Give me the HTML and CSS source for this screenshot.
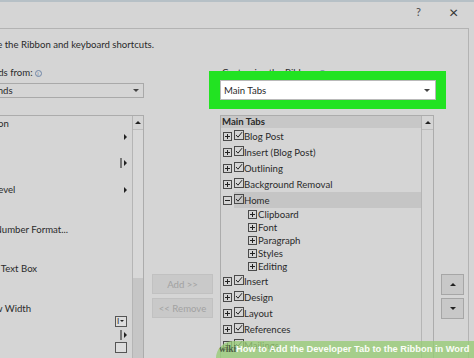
FILE: index.html
```html
<!DOCTYPE html>
<html lang="en">
<head>
    <meta charset="UTF-8">
    <title>Word Options - Customize Ribbon</title>
    <link rel="stylesheet" href="styles.css">
</head>
<body>
    <div class="topstrip"></div>
    <div class="titlebar">
        <span class="help">?</span>
        <span class="closebtn">×</span>
    </div>

    <div class="panel">
        <div class="intro">Customize the Ribbon and keyboard shortcuts.</div>

        <div class="columns">
            <!-- commands list -->
            <div class="col-left">
                <div class="label">Choose commands from:<span class="info">i</span></div>
                <div class="select"><span class="select-text">Popular Commands</span><span class="caret"></span></div>
                <div class="listbox">
                    <div class="items">
                        <div class="cmd"><span>Accept Revision</span></div>
                        <div class="cmd"><span>Add Table</span><span class="mark"><i class="tri"></i></span></div>
                        <div class="cmd"><span>Align Left</span></div>
                        <div class="cmd"><span>Bullets</span><span class="mark"><i class="bar"></i><i class="tri"></i></span></div>
                        <div class="cmd"><span>Center</span></div>
                        <div class="cmd"><span>Change List Level</span><span class="mark"><i class="tri"></i></span></div>
                        <div class="cmd"><span>Copy</span></div>
                        <div class="cmd"><span>Cut</span></div>
                        <div class="cmd"><span>Define New Number Format...</span></div>
                        <div class="cmd"><span>Delete</span></div>
                        <div class="cmd"><span>Draw Table</span></div>
                        <div class="cmd"><span>Draw Vertical Text Box</span></div>
                        <div class="cmd"><span>Email</span></div>
                        <div class="cmd"><span>Find</span></div>
                        <div class="cmd"><span>Fit to Window Width</span></div>
                        <div class="cmd"><span>Font</span><span class="mark"><i class="fontbox">I<b></b></i></span></div>
                        <div class="cmd"><span>Font Color</span><span class="mark"><i class="bar"></i><i class="tri"></i></span></div>
                        <div class="cmd"><span>Font Size</span><span class="mark"><i class="fontbox"></i></span></div>
                    </div>
                    <div class="scrollbar">
                        <div class="sb-btn"><i class="up"></i></div>
                        <div class="sb-thumb"></div>
                        <div class="sb-track"></div>
                    </div>
                </div>
            </div>

            <div class="col-mid">
                <div class="btn disabled">Add &gt;&gt;</div>
                <div class="btn disabled">&lt;&lt; Remove</div>
            </div>

            <!-- ribbon tree -->
            <div class="col-right">
                <div class="label">Customize the Ribbon:<span class="info">i</span></div>
                <div class="highlight">
                    <div class="select white"><span>Main Tabs</span><span class="caret"></span></div>
                </div>
                <div class="listbox">
                    <div class="items tree">
                        <div class="tree-head">Main Tabs</div>
                        <div class="node"><svg class="exp" viewBox="0 0 9 9"><rect x=".5" y=".5" width="8" height="8"/><path d="M2 4.5h5M4.5 2v5"/></svg><span class="sel"><svg class="chk" viewBox="0 0 10 10"><rect x=".5" y=".5" width="9" height="9"/><path d="M2 5l2 2.2 4-5"/></svg>Blog Post</span></div>
                        <div class="node"><svg class="exp" viewBox="0 0 9 9"><rect x=".5" y=".5" width="8" height="8"/><path d="M2 4.5h5M4.5 2v5"/></svg><span class="sel"><svg class="chk" viewBox="0 0 10 10"><rect x=".5" y=".5" width="9" height="9"/><path d="M2 5l2 2.2 4-5"/></svg>Insert (Blog Post)</span></div>
                        <div class="node"><svg class="exp" viewBox="0 0 9 9"><rect x=".5" y=".5" width="8" height="8"/><path d="M2 4.5h5M4.5 2v5"/></svg><span class="sel"><svg class="chk" viewBox="0 0 10 10"><rect x=".5" y=".5" width="9" height="9"/><path d="M2 5l2 2.2 4-5"/></svg>Outlining</span></div>
                        <div class="node"><svg class="exp" viewBox="0 0 9 9"><rect x=".5" y=".5" width="8" height="8"/><path d="M2 4.5h5M4.5 2v5"/></svg><span class="sel"><svg class="chk" viewBox="0 0 10 10"><rect x=".5" y=".5" width="9" height="9"/><path d="M2 5l2 2.2 4-5"/></svg>Background Removal</span></div>
                        <div class="node"><svg class="exp" viewBox="0 0 9 9"><rect x=".5" y=".5" width="8" height="8"/><path d="M2 4.5h5"/></svg><span class="sel active"><svg class="chk" viewBox="0 0 10 10"><rect x=".5" y=".5" width="9" height="9"/><path d="M2 5l2 2.2 4-5"/></svg>Home</span></div>
                        <div class="node sub"><svg class="exp" viewBox="0 0 9 9"><rect x=".5" y=".5" width="8" height="8"/><path d="M2 4.5h5M4.5 2v5"/></svg>Clipboard</div>
                        <div class="node sub"><svg class="exp" viewBox="0 0 9 9"><rect x=".5" y=".5" width="8" height="8"/><path d="M2 4.5h5M4.5 2v5"/></svg>Font</div>
                        <div class="node sub"><svg class="exp" viewBox="0 0 9 9"><rect x=".5" y=".5" width="8" height="8"/><path d="M2 4.5h5M4.5 2v5"/></svg>Paragraph</div>
                        <div class="node sub"><svg class="exp" viewBox="0 0 9 9"><rect x=".5" y=".5" width="8" height="8"/><path d="M2 4.5h5M4.5 2v5"/></svg>Styles</div>
                        <div class="node sub"><svg class="exp" viewBox="0 0 9 9"><rect x=".5" y=".5" width="8" height="8"/><path d="M2 4.5h5M4.5 2v5"/></svg>Editing</div>
                        <div class="node"><svg class="exp" viewBox="0 0 9 9"><rect x=".5" y=".5" width="8" height="8"/><path d="M2 4.5h5M4.5 2v5"/></svg><span class="sel"><svg class="chk" viewBox="0 0 10 10"><rect x=".5" y=".5" width="9" height="9"/><path d="M2 5l2 2.2 4-5"/></svg>Insert</span></div>
                        <div class="node"><svg class="exp" viewBox="0 0 9 9"><rect x=".5" y=".5" width="8" height="8"/><path d="M2 4.5h5M4.5 2v5"/></svg><span class="sel"><svg class="chk" viewBox="0 0 10 10"><rect x=".5" y=".5" width="9" height="9"/><path d="M2 5l2 2.2 4-5"/></svg>Design</span></div>
                        <div class="node"><svg class="exp" viewBox="0 0 9 9"><rect x=".5" y=".5" width="8" height="8"/><path d="M2 4.5h5M4.5 2v5"/></svg><span class="sel"><svg class="chk" viewBox="0 0 10 10"><rect x=".5" y=".5" width="9" height="9"/><path d="M2 5l2 2.2 4-5"/></svg>Layout</span></div>
                        <div class="node"><svg class="exp" viewBox="0 0 9 9"><rect x=".5" y=".5" width="8" height="8"/><path d="M2 4.5h5M4.5 2v5"/></svg><span class="sel"><svg class="chk" viewBox="0 0 10 10"><rect x=".5" y=".5" width="9" height="9"/><path d="M2 5l2 2.2 4-5"/></svg>References</span></div>
                        <div class="node"><svg class="exp" viewBox="0 0 9 9"><rect x=".5" y=".5" width="8" height="8"/><path d="M2 4.5h5M4.5 2v5"/></svg><span class="sel"><svg class="chk" viewBox="0 0 10 10"><rect x=".5" y=".5" width="9" height="9"/><path d="M2 5l2 2.2 4-5"/></svg>Mailings</span></div>
                    </div>
                    <div class="scrollbar">
                        <div class="sb-btn"><i class="up"></i></div>
                    </div>
                </div>
            </div>

            <div class="col-order">
                <div class="btn order"><i class="up"></i></div>
                <div class="btn order"><i class="down"></i></div>
            </div>
        </div>
    </div>

    <div class="watermark"><span class="wiki">wiki</span><span class="how">How</span> to Add the Developer Tab to the Ribbon in Word</div>
</body>
</html>
```

FILE: styles.css
```css
* {
    box-sizing: border-box;
}

body {
    margin: 0;
    width: 474px;
    height: 358px;
    overflow: hidden;
    position: relative;
    background: #d5d5d5;
    font-family: Lato, 'Noto Sans', sans-serif;
    font-size: 9.6px;
    color: #2a2a2a;
}

.topstrip {
    height: 2px;
    background: #b6c0c6;
}

.titlebar {
    height: 26px;
    padding: 0 0 7px 0;
    display: flex;
    align-items: center;
}

.help {
    margin-left: 416px;
    width: 8px;
    font-size: 11px;
    color: #4a4a4a;
    line-height: 1;
}

.closebtn {
    margin-left: 25px;
    width: 12px;
    height: 14px;
    font-size: 16px;
    line-height: 14px;
    color: #333;
}

.panel {
    width: 469px;
    height: 330px;
    border-top: 1px solid #b3b3b3;
    border-right: 1px solid #b3b3b3;
}

.intro {
    margin: 9px 0 0 -42px;
    line-height: 14px;
    white-space: nowrap;
}

.columns {
    display: flex;
}

.col-left {
    flex: none;
    width: 224px;
    margin-left: -80px;
}

.col-mid {
    flex: none;
    width: 76px;
    padding: 222px 0 0 8px;
    display: flex;
    flex-direction: column;
    gap: 4px;
}

.col-right {
    flex: none;
    width: 214px;
}

.col-order {
    flex: none;
    width: 34px;
    padding: 222px 0 0 7px;
    display: flex;
    flex-direction: column;
    gap: 3px;
}

.label {
    margin-top: 14px;
    line-height: 14px;
    white-space: nowrap;
    display: flex;
    align-items: center;
}

.col-left .label {
    padding-left: 8px;
}

.col-right .label {
    padding-left: 2px;
}

.info {
    width: 7px;
    height: 7px;
    margin-left: 2px;
    border: 1px solid #6f86a8;
    border-radius: 50%;
    font-style: normal;
    font-size: 6px;
    line-height: 5px;
    text-align: center;
    color: #6f86a8;
}

.select {
    height: 15px;
    margin-top: 3px;
    border: 1px solid #a9a9a9;
    display: flex;
    align-items: center;
    justify-content: space-between;
    padding: 0 4px 0 10px;
    white-space: nowrap;
}

.select.white {
    height: 20px;
    margin-top: 0;
    background: #fff;
    border-color: #b9b9b9;
    padding: 0 5px 0 3px;
}

.caret {
    width: 0;
    height: 0;
    border-left: 3px solid transparent;
    border-right: 3px solid transparent;
    border-top: 3px solid #444;
}

.highlight {
    position: relative;
    z-index: 1;
    margin: -9px -12px 0 -11px;
    padding: 9px 10px 9px 11px;
    background: #22e322;
}

.listbox {
    margin-top: 17px;
    height: 260px;
    border: 1px solid #acacac;
    display: flex;
}

.col-right .listbox {
    margin-top: 6px;
}

.items {
    flex: 1;
    min-width: 0;
    overflow: hidden;
}

.cmd {
    height: 13.2px;
    line-height: 13.2px;
    display: flex;
    justify-content: space-between;
    align-items: center;
    padding: 0 5px 0 21px;
    white-space: nowrap;
}

.cmd:first-child {
    margin-top: 1px;
}

.mark {
    display: flex;
    align-items: center;
    gap: 2px;
}

.tri {
    width: 0;
    height: 0;
    border-top: 3px solid transparent;
    border-bottom: 3px solid transparent;
    border-left: 3px solid #222;
}

.bar {
    width: 2px;
    height: 10px;
    background: #777;
}

.fontbox {
    width: 12px;
    height: 11px;
    border: 1px solid #555;
    background: #ddd;
    font-style: normal;
    font-size: 8px;
    line-height: 9px;
    padding-left: 1px;
    display: flex;
    align-items: center;
    gap: 1px;
}

.fontbox b {
    width: 0;
    height: 0;
    border-left: 2px solid transparent;
    border-right: 2px solid transparent;
    border-top: 2px solid #222;
}

.scrollbar {
    flex: none;
    width: 11px;
    border-left: 1px solid #b5b5b5;
    display: flex;
    flex-direction: column;
}

.col-right .scrollbar {
    width: 12px;
}

.sb-btn {
    height: 14px;
    border-bottom: 1px solid #bdbdbd;
    display: flex;
    align-items: center;
    justify-content: center;
}

.sb-thumb {
    height: 148px;
    background: #d8d8d8;
}

.sb-track {
    flex: 1;
    background: #c6c6c6;
}

.up, .down {
    width: 0;
    height: 0;
    border-left: 3px solid transparent;
    border-right: 3px solid transparent;
}

.up {
    border-bottom: 3px solid #222;
}

.down {
    border-top: 3px solid #222;
}

.btn {
    display: flex;
    align-items: center;
    justify-content: center;
}

.btn.disabled {
    width: 61px;
    height: 20px;
    background: #c9c9c9;
    border: 1px solid #c1c1c1;
    color: #a2a2a2;
}

.btn.order {
    width: 23px;
    height: 21px;
    background: #c8c8c8;
    border: 1px solid #a6a6a6;
}

.tree-head {
    height: 12px;
    line-height: 12px;
    font-weight: bold;
    padding-left: 1px;
    background: #c7c7c7;
}

.node {
    height: 16px;
    display: flex;
    align-items: center;
    padding-left: 2px;
    white-space: nowrap;
}

.node.sub {
    height: 13px;
    line-height: 18px;
    padding-left: 27px;
    gap: 1px;
}

.sel {
    flex: 1;
    align-self: stretch;
    display: flex;
    align-items: center;
    margin-left: 2px;
}

.sel.active {
    background: #c5c5c5;
}

.exp {
    flex: none;
    width: 9px;
    height: 9px;
}

.exp rect, .chk rect {
    fill: none;
    stroke: #4a4a4a;
    stroke-width: 1;
}

.exp path, .chk path {
    fill: none;
    stroke: #222;
    stroke-width: 1;
}

.chk {
    flex: none;
    width: 10px;
    height: 10px;
    margin-top: -3px;
}

.watermark {
    position: absolute;
    left: 216px;
    right: 0;
    bottom: 0;
    height: 17px;
    overflow: hidden;
    border-top-left-radius: 18px 17px;
    background: rgba(152, 204, 120, 0.8);
    color: #fbfdf8;
    font-family: 'Liberation Sans', Arial, sans-serif;
    font-weight: bold;
    font-size: 9.3px;
    line-height: 17px;
    white-space: nowrap;
    padding-left: 3px;
}

.wiki {
    font-family: 'Liberation Serif', serif;
    color: #4f5f47;
}
```
